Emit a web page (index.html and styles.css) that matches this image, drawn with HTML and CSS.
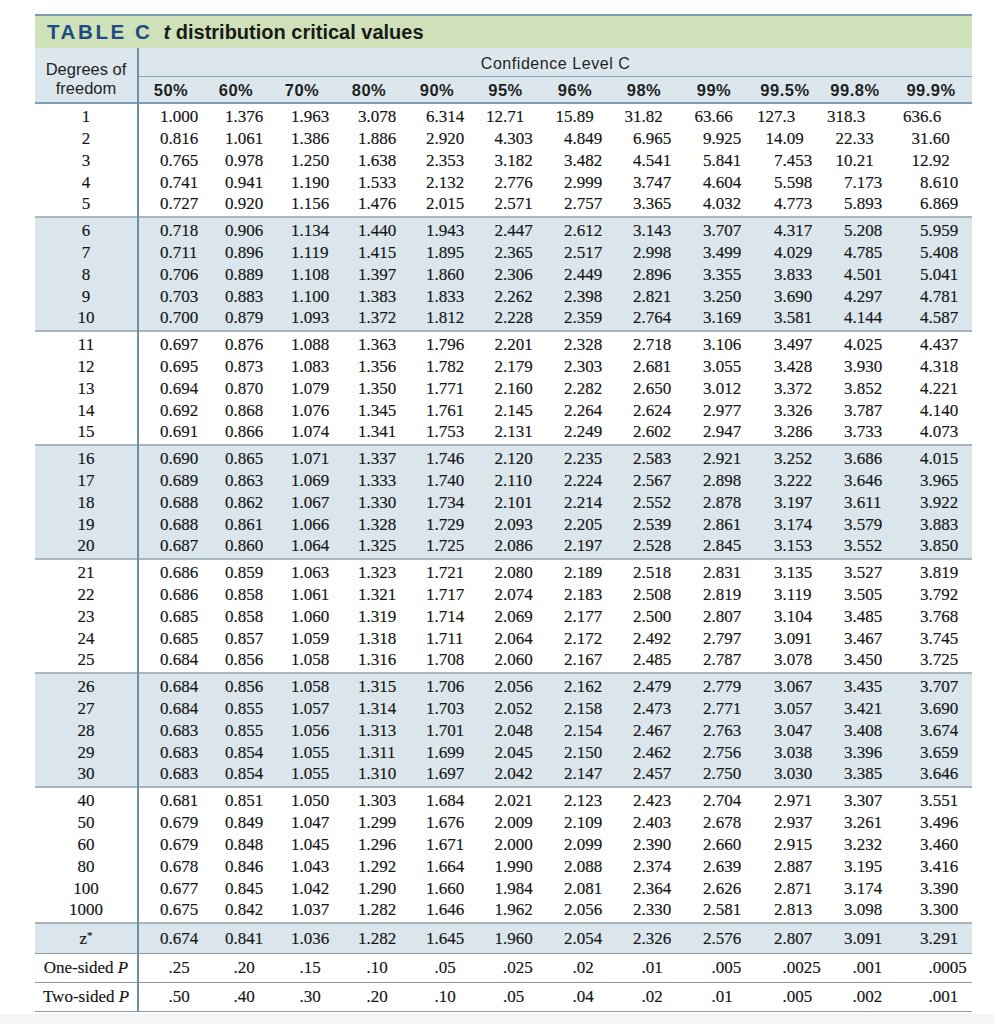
FILE: index.html
```html
<!DOCTYPE html>
<html lang="en">
<head>
<meta charset="utf-8">
<title>TABLE C t distribution critical values</title>
<link rel="stylesheet" href="styles.css">
</head>
<body>
<div class="sheet">
  <h1 class="title"><span class="tc">TABLE C</span><span class="tt"><em>t</em> distribution critical values</span></h1>
  <table class="tdist" id="tdist">
    <colgroup>
      <col><col><col><col><col><col><col><col><col><col><col><col><col>
    </colgroup>
    <thead>
      <tr class="h1"><th rowspan="2" class="df-head">Degrees of<br>freedom</th><th colspan="12" class="cl">Confidence Level C</th></tr>
      <tr class="h2"><th>50%</th><th>60%</th><th>70%</th><th>80%</th><th>90%</th><th>95%</th><th>96%</th><th>98%</th><th>99%</th><th>99.5%</th><th>99.8%</th><th>99.9%</th></tr>
    </thead>
    <tbody class="foot" id="foot">
      <tr class="zrow"><td class="df">z<sup>*</sup></td><td><span class="ip">0</span>.674</td><td><span class="ip">0</span>.841</td><td><span class="ip">1</span>.036</td><td><span class="ip">1</span>.282</td><td><span class="ip">1</span>.645</td><td><span class="ip">1</span>.960</td><td><span class="ip">2</span>.054</td><td><span class="ip">2</span>.326</td><td><span class="ip">2</span>.576</td><td><span class="ip">2</span>.807</td><td><span class="ip">3</span>.091</td><td><span class="ip">3</span>.291</td></tr>
      <tr class="prow"><td class="df">One-sided <i>P</i></td><td><span class="ip"></span>.25</td><td><span class="ip"></span>.20</td><td><span class="ip"></span>.15</td><td><span class="ip"></span>.10</td><td><span class="ip"></span>.05</td><td><span class="ip"></span>.025</td><td><span class="ip"></span>.02</td><td><span class="ip"></span>.01</td><td><span class="ip"></span>.005</td><td><span class="ip"></span>.0025</td><td><span class="ip"></span>.001</td><td><span class="ip"></span>.0005</td></tr>
      <tr class="prow"><td class="df">Two-sided <i>P</i></td><td><span class="ip"></span>.50</td><td><span class="ip"></span>.40</td><td><span class="ip"></span>.30</td><td><span class="ip"></span>.20</td><td><span class="ip"></span>.10</td><td><span class="ip"></span>.05</td><td><span class="ip"></span>.04</td><td><span class="ip"></span>.02</td><td><span class="ip"></span>.01</td><td><span class="ip"></span>.005</td><td><span class="ip"></span>.002</td><td><span class="ip"></span>.001</td></tr>
    </tbody>
  </table>
</div>
<div class="page-end"></div>
<script src="script.js"></script>
</body>
</html>
```

FILE: styles.css
```css
* { box-sizing: border-box; }
html, body { margin: 0; padding: 0; background: #ffffff; }

.sheet { margin: 14px 0 0 35px; width: 937px; }

.title {
  margin: 0;
  height: 34px;
  border-top: 2px solid #7b9cb3;
  background: #cfe1b8;
  padding: 0 0 0 12px;
  display: flex;
  align-items: center;
  gap: 11px;
  font: 700 20px/1 "Liberation Sans", Arial, sans-serif;
  color: #1a1a1a;
}
.tc { color: #1d4b82; letter-spacing: 2.6px; font-size: 20.5px; }
.tt em { font-style: italic; }

.tdist {
  width: 937px;
  border-collapse: collapse;
  table-layout: fixed;
  font-family: "Liberation Serif", "Times New Roman", serif;
  font-size: 17px;
  color: #141414;
}
.tdist col:nth-child(1) { width: 103px; }
.tdist col:nth-child(2) { width: 65px; }
.tdist col:nth-child(3) { width: 66px; }
.tdist col:nth-child(4) { width: 66px; }
.tdist col:nth-child(5) { width: 68px; }
.tdist col:nth-child(6) { width: 68px; }
.tdist col:nth-child(7) { width: 69px; }
.tdist col:nth-child(8) { width: 70px; }
.tdist col:nth-child(9) { width: 68px; }
.tdist col:nth-child(10) { width: 72px; }
.tdist col:nth-child(11) { width: 70px; }
.tdist col:nth-child(12) { width: 70px; }
.tdist col:nth-child(13) { width: 82px; }

.tdist thead { background: #dce7ed; border-bottom: 2px solid #7d9db3; }
.tdist th {
  padding: 0;
  font-family: "Liberation Sans", Arial, sans-serif;
  color: #1f1f1f;
  text-align: center;
  white-space: nowrap;
}
.h1 th { height: 28px; }
.df-head {
  font-weight: 400;
  font-size: 16.5px;
  line-height: 19px;
  border-right: 2px solid #6b91ad;
  padding-top: 7px !important;
}
.cl {
  font-weight: 400;
  font-size: 16px;
  letter-spacing: 0.55px;
  border-bottom: 1px solid #86a6bb;
  padding-top: 5px !important;
}
.h2 th {
  height: 27px;
  font-weight: 700;
  font-size: 16.5px;
  letter-spacing: 0.5px;
  padding-top: 2px;
}

.tdist td {
  padding: 0;
  height: 22px;
  line-height: 1;
  white-space: nowrap;
  vertical-align: middle;
  -webkit-text-stroke: 0.15px #141414;
}
.grp tr:first-child td { height: 24px; padding-top: 2px; }
.grp tr:last-child td { height: 24px; padding-bottom: 2px; }
.tdist td.df { text-align: center; border-right: 2px solid #6b91ad; }
.tdist .ip { display: inline-block; width: calc(50% - 2.5px); text-align: right; }

.grp { border-bottom: 2px solid #a9b5bd; }
.shade { background: #dbe6ec; }

.zrow td { height: 30px; background: #dbe6ec; border-bottom: 1px solid #8e9aa2; }
.zrow sup { font-size: 11px; vertical-align: 5px; line-height: 0; }
.prow td { height: 29px; border-bottom: 1px solid #8e9aa2; }
.prow i { font-style: italic; }

.page-end { margin-top: 2px; height: 40px; background: #f5f5f5; }
```

FILE: script.js
```js
const DATA = `
1 1.000 1.376 1.963 3.078 6.314 12.71 15.89 31.82 63.66 127.3 318.3 636.6
2 0.816 1.061 1.386 1.886 2.920 4.303 4.849 6.965 9.925 14.09 22.33 31.60
3 0.765 0.978 1.250 1.638 2.353 3.182 3.482 4.541 5.841 7.453 10.21 12.92
4 0.741 0.941 1.190 1.533 2.132 2.776 2.999 3.747 4.604 5.598 7.173 8.610
5 0.727 0.920 1.156 1.476 2.015 2.571 2.757 3.365 4.032 4.773 5.893 6.869

6 0.718 0.906 1.134 1.440 1.943 2.447 2.612 3.143 3.707 4.317 5.208 5.959
7 0.711 0.896 1.119 1.415 1.895 2.365 2.517 2.998 3.499 4.029 4.785 5.408
8 0.706 0.889 1.108 1.397 1.860 2.306 2.449 2.896 3.355 3.833 4.501 5.041
9 0.703 0.883 1.100 1.383 1.833 2.262 2.398 2.821 3.250 3.690 4.297 4.781
10 0.700 0.879 1.093 1.372 1.812 2.228 2.359 2.764 3.169 3.581 4.144 4.587

11 0.697 0.876 1.088 1.363 1.796 2.201 2.328 2.718 3.106 3.497 4.025 4.437
12 0.695 0.873 1.083 1.356 1.782 2.179 2.303 2.681 3.055 3.428 3.930 4.318
13 0.694 0.870 1.079 1.350 1.771 2.160 2.282 2.650 3.012 3.372 3.852 4.221
14 0.692 0.868 1.076 1.345 1.761 2.145 2.264 2.624 2.977 3.326 3.787 4.140
15 0.691 0.866 1.074 1.341 1.753 2.131 2.249 2.602 2.947 3.286 3.733 4.073

16 0.690 0.865 1.071 1.337 1.746 2.120 2.235 2.583 2.921 3.252 3.686 4.015
17 0.689 0.863 1.069 1.333 1.740 2.110 2.224 2.567 2.898 3.222 3.646 3.965
18 0.688 0.862 1.067 1.330 1.734 2.101 2.214 2.552 2.878 3.197 3.611 3.922
19 0.688 0.861 1.066 1.328 1.729 2.093 2.205 2.539 2.861 3.174 3.579 3.883
20 0.687 0.860 1.064 1.325 1.725 2.086 2.197 2.528 2.845 3.153 3.552 3.850

21 0.686 0.859 1.063 1.323 1.721 2.080 2.189 2.518 2.831 3.135 3.527 3.819
22 0.686 0.858 1.061 1.321 1.717 2.074 2.183 2.508 2.819 3.119 3.505 3.792
23 0.685 0.858 1.060 1.319 1.714 2.069 2.177 2.500 2.807 3.104 3.485 3.768
24 0.685 0.857 1.059 1.318 1.711 2.064 2.172 2.492 2.797 3.091 3.467 3.745
25 0.684 0.856 1.058 1.316 1.708 2.060 2.167 2.485 2.787 3.078 3.450 3.725

26 0.684 0.856 1.058 1.315 1.706 2.056 2.162 2.479 2.779 3.067 3.435 3.707
27 0.684 0.855 1.057 1.314 1.703 2.052 2.158 2.473 2.771 3.057 3.421 3.690
28 0.683 0.855 1.056 1.313 1.701 2.048 2.154 2.467 2.763 3.047 3.408 3.674
29 0.683 0.854 1.055 1.311 1.699 2.045 2.150 2.462 2.756 3.038 3.396 3.659
30 0.683 0.854 1.055 1.310 1.697 2.042 2.147 2.457 2.750 3.030 3.385 3.646

40 0.681 0.851 1.050 1.303 1.684 2.021 2.123 2.423 2.704 2.971 3.307 3.551
50 0.679 0.849 1.047 1.299 1.676 2.009 2.109 2.403 2.678 2.937 3.261 3.496
60 0.679 0.848 1.045 1.296 1.671 2.000 2.099 2.390 2.660 2.915 3.232 3.460
80 0.678 0.846 1.043 1.292 1.664 1.990 2.088 2.374 2.639 2.887 3.195 3.416
100 0.677 0.845 1.042 1.290 1.660 1.984 2.081 2.364 2.626 2.871 3.174 3.390
1000 0.675 0.842 1.037 1.282 1.646 1.962 2.056 2.330 2.581 2.813 3.098 3.300
`;

(function () {
  const table = document.getElementById('tdist');
  const foot = document.getElementById('foot');

  function numCell(v) {
    const td = document.createElement('td');
    const dot = v.indexOf('.');
    const ip = document.createElement('span');
    ip.className = 'ip';
    ip.textContent = v.slice(0, dot);
    td.appendChild(ip);
    td.appendChild(document.createTextNode(v.slice(dot)));
    return td;
  }

  DATA.trim().split(/\n\s*\n/).forEach(function (block, gi) {
    const tb = document.createElement('tbody');
    tb.className = 'grp' + (gi % 2 ? ' shade' : '');
    block.trim().split('\n').forEach(function (line) {
      const parts = line.trim().split(/\s+/);
      const tr = document.createElement('tr');
      const df = document.createElement('td');
      df.className = 'df';
      df.textContent = parts[0];
      tr.appendChild(df);
      parts.slice(1).forEach(function (v) { tr.appendChild(numCell(v)); });
      tb.appendChild(tr);
    });
    table.insertBefore(tb, foot);
  });
})();
```
